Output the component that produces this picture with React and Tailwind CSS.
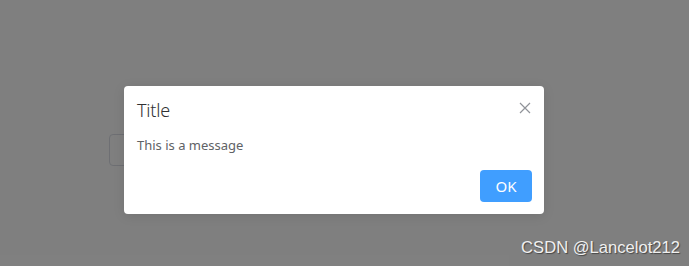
export default function App() {
  return (
    <div className="relative h-[266px] w-full overflow-hidden bg-white" style={{ fontFamily: '"Noto Sans", "Open Sans", sans-serif' }}>
      {/* page content behind the mask (its label is hidden under the dialog) */}
      <div className="pl-[109px] pt-[134px]">
        <button className="h-[32px] w-[110px] rounded-[4px] border border-[#dcdfe6] bg-white" aria-label="Open" />
      </div>

      {/* mask */}
      <div className="absolute inset-0 bg-black/50">
        <div className="pl-[124px] pt-[86px]">
          <div className="w-[420px] rounded-[4px] bg-white pb-[12px] shadow-[0_2px_12px_rgba(0,0,0,0.1)]">
            <div className="flex items-start justify-between pl-[13px] pr-[12px] pt-[10px]">
              <span className="text-[18px] font-light leading-[28px] tracking-[-0.2px] text-[#303133]">Title</span>
              <svg className="mt-[5px]" width="14" height="14" viewBox="0 0 14 14" fill="none" stroke="#909399" strokeWidth="1.2">
                <path d="M2 2 L12 12 M12 2 L2 12" />
              </svg>
            </div>
            <div className="pl-[13px] pt-[11px] text-[13px] leading-[20px] text-[#606266]">This is a message</div>
            <div className="flex justify-end pr-[12px] pt-[15px]">
              <button className="h-[32px] w-[52px] rounded-[4px] bg-[#409eff] text-[15px] text-white">OK</button>
            </div>
          </div>
        </div>
      </div>

      {/* watermark */}
      <div
        className="absolute bottom-[8px] right-[9px] text-[16.6px] leading-[20px] text-[#f0f0f0]"
        style={{ fontFamily: '"Liberation Sans", Arial, sans-serif', textShadow: "1px 1px 1px rgba(0,0,0,0.45)" }}
      >
        CSDN @Lancelot212
      </div>
    </div>
  );
}
